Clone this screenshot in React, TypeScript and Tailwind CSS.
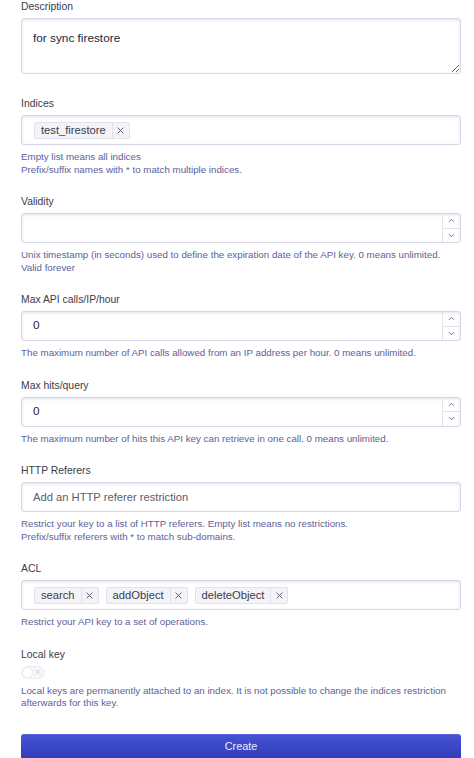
import React from "react";

function Label({ children, className = "" }: { children: React.ReactNode; className?: string }) {
  return (
    <div className={"text-[10.4px] leading-4 text-[#3b3c48] mb-[3px] " + className}>{children}</div>
  );
}

function Help({ children }: { children: React.ReactNode }) {
  return <div className="mt-[6px] text-[9.75px] leading-[12.5px] text-[#5d6198]">{children}</div>;
}

function XIcon({ size = 7, color = "#5a5c70" }: { size?: number; color?: string }) {
  return (
    <svg width={size} height={size} viewBox="0 0 8 8" fill="none">
      <path d="M1 1 L7 7 M7 1 L1 7" stroke={color} strokeWidth="1.1" strokeLinecap="round" />
    </svg>
  );
}

function Tag({ text }: { text: string }) {
  return (
    <div className="inline-flex h-[17px] items-stretch rounded-[2px] border border-[#e1e2ec] bg-[#f3f3f8]">
      <span className="flex items-center pl-[6px] pr-[6px] text-[11.2px] text-[#3b3c48]">{text}</span>
      <span className="flex w-[17px] items-center justify-center border-l border-[#e1e2ec]">
        <XIcon />
      </span>
    </div>
  );
}

const boxCls =
  "rounded-[3px] border border-[#d6d6e7] bg-white shadow-[inset_0_1px_3px_rgba(119,122,175,0.22)]";

function NumberInput({ value }: { value: string }) {
  return (
    <div className={"flex h-[30px] " + boxCls}>
      <div className="flex flex-1 items-center pl-[11px] text-[11.8px] text-[#23263b]">{value}</div>
      <div className="flex w-[18px] flex-col border-l border-[#e3e3ee]">
        <div className="flex flex-1 items-center justify-center border-b border-[#e3e3ee]">
          <svg width="7" height="5" viewBox="0 0 7 5" fill="none">
            <path d="M1 3.8 L3.5 1.3 L6 3.8" stroke="#6f7080" strokeWidth="1" />
          </svg>
        </div>
        <div className="flex flex-1 items-center justify-center">
          <svg width="7" height="5" viewBox="0 0 7 5" fill="none">
            <path d="M1 1.2 L3.5 3.7 L6 1.2" stroke="#6f7080" strokeWidth="1" />
          </svg>
        </div>
      </div>
    </div>
  );
}

export default function App() {
  return (
    <div className="min-h-[758px] w-[474px] overflow-hidden bg-white pl-[21px] pr-[13px] font-['Liberation_Sans',Arial,sans-serif]">
      <div className="flex flex-col">
        {/* Description */}
        <Label className="mt-[-1px]">Description</Label>
        <textarea
          readOnly
          defaultValue="for sync firestore"
          className={"block h-[56px] w-full px-[11px] pt-[11px] text-[11.8px] leading-4 text-[#23263b] outline-none " + boxCls}
        />

        {/* Indices */}
        <div className="mt-[22px]">
          <Label>Indices</Label>
          <div className={"flex h-[30px] items-center pl-[12px] " + boxCls}>
            <Tag text="test_firestore" />
          </div>
          <Help>
            Empty list means all indices
            <br />
            Prefix/suffix names with * to match multiple indices.
          </Help>
        </div>

        {/* Validity */}
        <div className="mt-[18px]">
          <Label>Validity</Label>
          <NumberInput value="" />
          <Help>
            Unix timestamp (in seconds) used to define the expiration date of the API key. 0 means unlimited.
            <br />
            Valid forever
          </Help>
        </div>

        {/* Max API calls */}
        <div className="mt-[18px]">
          <Label>Max API calls/IP/hour</Label>
          <NumberInput value="0" />
          <Help>The maximum number of API calls allowed from an IP address per hour. 0 means unlimited.</Help>
        </div>

        {/* Max hits */}
        <div className="mt-[18px]">
          <Label>Max hits/query</Label>
          <NumberInput value="0" />
          <Help>The maximum number of hits this API key can retrieve in one call. 0 means unlimited.</Help>
        </div>

        {/* HTTP Referers */}
        <div className="mt-[18px]">
          <Label>HTTP Referers</Label>
          <div className={"flex h-[30px] items-center pl-[11px] text-[11.2px] text-[#5a5c70] " + boxCls}>
            Add an HTTP referer restriction
          </div>
          <Help>
            Restrict your key to a list of HTTP referers. Empty list means no restrictions.
            <br />
            Prefix/suffix referers with * to match sub-domains.
          </Help>
        </div>

        {/* ACL */}
        <div className="mt-[18px]">
          <Label>ACL</Label>
          <div className={"flex h-[30px] items-center gap-[7px] pl-[12px] " + boxCls}>
            <Tag text="search" />
            <Tag text="addObject" />
            <Tag text="deleteObject" />
          </div>
          <Help>Restrict your API key to a set of operations.</Help>
        </div>

        {/* Local key */}
        <div className="mt-[18px]">
          <Label>Local key</Label>
          <div className="relative mt-[1px] h-[13px] w-[24px] rounded-full border border-[#ebebf2] bg-[#f7f7fb]">
            <div className="absolute left-[0px] top-[0px] h-[11px] w-[11px] rounded-full border border-[#ebebf2] bg-white" />
            <div className="absolute right-[3px] top-[2px] flex h-[7px] w-[7px] items-center justify-center">
              <XIcon size={6} color="#c9cad8" />
            </div>
          </div>
          <Help>
            Local keys are permanently attached to an index. It is not possible to change the indices restriction
            <br />
            afterwards for this key.
          </Help>
        </div>

        {/* Create */}
        <button className="mt-[24px] flex h-[26px] w-full items-center justify-center rounded-[3px] border-t border-[#5a68e0] bg-gradient-to-b from-[#4553d4] to-[#2f3cb7] pb-[2px] text-[10.9px] text-[#e8eaff]">
          Create
        </button>
      </div>
    </div>
  );
}
